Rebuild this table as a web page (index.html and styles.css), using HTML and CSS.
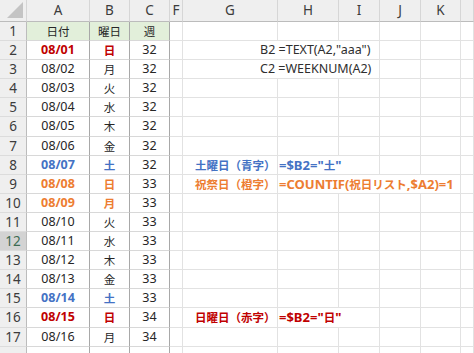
FILE: index.html
```html
<!DOCTYPE html>
<html lang="ja">
<head>
<meta charset="utf-8">
<link rel="stylesheet" href="styles.css">
</head>
<body>
<div class="sheet">
  <div class="row hdr">
    <div class="c corner"><span class="tri"></span></div>
    <div class="c">A</div><div class="c">B</div><div class="c">C</div><div class="c">F</div>
    <div class="c">G</div><div class="c">H</div><div class="c">I</div><div class="c">J</div><div class="c">K</div><div class="c"></div>
  </div>
  <div class="row">
    <div class="c rh">1</div>
    <div class="c t th jp">日付</div><div class="c t th jp">曜日</div><div class="c t th jp">週</div>
    <div class="c"></div><div class="c"></div><div class="c"></div><div class="c"></div><div class="c"></div><div class="c"></div><div class="c"></div>
  </div>
  <div class="row">
    <div class="c rh">2</div>
    <div class="c t red">08/01</div><div class="c t red jp">日</div><div class="c t">32</div>
    <div class="c"></div><div class="c note s3">B2 =TEXT(A2,"aaa")</div><div class="c"></div><div class="c"></div><div class="c"></div>
  </div>
  <div class="row">
    <div class="c rh">3</div>
    <div class="c t">08/02</div><div class="c t jp">月</div><div class="c t">32</div>
    <div class="c"></div><div class="c note s3">C2 =WEEKNUM(A2)</div><div class="c"></div><div class="c"></div><div class="c"></div>
  </div>
  <div class="row">
    <div class="c rh">4</div>
    <div class="c t">08/03</div><div class="c t jp">火</div><div class="c t">32</div>
    <div class="c"></div><div class="c"></div><div class="c"></div><div class="c"></div><div class="c"></div><div class="c"></div><div class="c"></div>
  </div>
  <div class="row">
    <div class="c rh">5</div>
    <div class="c t">08/04</div><div class="c t jp">水</div><div class="c t">32</div>
    <div class="c"></div><div class="c"></div><div class="c"></div><div class="c"></div><div class="c"></div><div class="c"></div><div class="c"></div>
  </div>
  <div class="row">
    <div class="c rh">6</div>
    <div class="c t">08/05</div><div class="c t jp">木</div><div class="c t">32</div>
    <div class="c"></div><div class="c"></div><div class="c"></div><div class="c"></div><div class="c"></div><div class="c"></div><div class="c"></div>
  </div>
  <div class="row">
    <div class="c rh">7</div>
    <div class="c t">08/06</div><div class="c t jp">金</div><div class="c t">32</div>
    <div class="c"></div><div class="c"></div><div class="c"></div><div class="c"></div><div class="c"></div><div class="c"></div><div class="c"></div>
  </div>
  <div class="row">
    <div class="c rh">8</div>
    <div class="c t blue">08/07</div><div class="c t blue jp">土</div><div class="c t">32</div>
    <div class="c"></div><div class="c lbl blue jp">土曜日（青字）</div><div class="c fx blue s2">=$B2="<span class="jp">土</span>"</div><div class="c"></div><div class="c"></div><div class="c"></div>
  </div>
  <div class="row">
    <div class="c rh">9</div>
    <div class="c t orange">08/08</div><div class="c t orange jp">日</div><div class="c t">33</div>
    <div class="c"></div><div class="c lbl orange jp">祝祭日（橙字）</div><div class="c fx orange s4">=COUNTIF(<span class="jp">祝日リスト</span>,$A2)=1</div><div class="c"></div>
  </div>
  <div class="row">
    <div class="c rh">10</div>
    <div class="c t orange">08/09</div><div class="c t orange jp">月</div><div class="c t">33</div>
    <div class="c"></div><div class="c"></div><div class="c"></div><div class="c"></div><div class="c"></div><div class="c"></div><div class="c"></div>
  </div>
  <div class="row">
    <div class="c rh">11</div>
    <div class="c t">08/10</div><div class="c t jp">火</div><div class="c t">33</div>
    <div class="c"></div><div class="c"></div><div class="c"></div><div class="c"></div><div class="c"></div><div class="c"></div><div class="c"></div>
  </div>
  <div class="row">
    <div class="c rh sel">12</div>
    <div class="c t">08/11</div><div class="c t jp">水</div><div class="c t">33</div>
    <div class="c"></div><div class="c"></div><div class="c"></div><div class="c"></div><div class="c"></div><div class="c"></div><div class="c"></div>
  </div>
  <div class="row">
    <div class="c rh">13</div>
    <div class="c t">08/12</div><div class="c t jp">木</div><div class="c t">33</div>
    <div class="c"></div><div class="c"></div><div class="c"></div><div class="c"></div><div class="c"></div><div class="c"></div><div class="c"></div>
  </div>
  <div class="row">
    <div class="c rh">14</div>
    <div class="c t">08/13</div><div class="c t jp">金</div><div class="c t">33</div>
    <div class="c"></div><div class="c"></div><div class="c"></div><div class="c"></div><div class="c"></div><div class="c"></div><div class="c"></div>
  </div>
  <div class="row">
    <div class="c rh">15</div>
    <div class="c t blue">08/14</div><div class="c t blue jp">土</div><div class="c t">33</div>
    <div class="c"></div><div class="c"></div><div class="c"></div><div class="c"></div><div class="c"></div><div class="c"></div><div class="c"></div>
  </div>
  <div class="row">
    <div class="c rh">16</div>
    <div class="c t red">08/15</div><div class="c t red jp">日</div><div class="c t">34</div>
    <div class="c"></div><div class="c lbl red jp">日曜日（赤字）</div><div class="c fx red s2">=$B2="<span class="jp">日</span>"</div><div class="c"></div><div class="c"></div><div class="c"></div>
  </div>
  <div class="row">
    <div class="c rh">17</div>
    <div class="c t">08/16</div><div class="c t jp">月</div><div class="c t">34</div>
    <div class="c"></div><div class="c"></div><div class="c"></div><div class="c"></div><div class="c"></div><div class="c"></div><div class="c"></div>
  </div>
  <div class="row last">
    <div class="c rh">18</div>
    <div class="c t">08/17</div><div class="c t jp">火</div><div class="c t">34</div>
    <div class="c"></div><div class="c"></div><div class="c"></div><div class="c"></div><div class="c"></div><div class="c"></div><div class="c"></div>
  </div>
</div>
</body>
</html>
```

FILE: styles.css
```css
html, body {
  margin: 0;
  padding: 0;
}
body {
  width: 474px;
  height: 353px;
  overflow: hidden;
  background: #ffffff;
  font-family: "Noto Sans", "Noto Sans CJK JP", sans-serif;
  font-size: 12.5px;
  color: #262626;
}
.sheet {
  display: flex;
  flex-direction: column;
}
.row {
  display: grid;
  grid-template-columns: 27px 63px 40px 40px 13px 95px 61px 41px 41px 40px 13px;
  height: 19.1px;
  line-height: 18px;
}
.c {
  box-sizing: border-box;
  border-right: 1px solid #e2e2e2;
  border-bottom: 1px solid #e2e2e2;
  white-space: nowrap;
  overflow: visible;
}
.jp {
  font-family: "Noto Sans CJK JP", sans-serif;
  font-size: 11.5px;
}
.hdr {
  height: 22px;
  line-height: 21px;
}
.hdr .c {
  background: #efefef;
  border-right: 1px solid #d6d6d6;
  border-bottom: 1px solid #bcbcbc;
  text-align: center;
  color: #3c3c3c;
  font-family: "Noto Sans", sans-serif;
  font-size: 13.5px;
}
.hdr .corner {
  display: flex;
  align-items: flex-end;
  justify-content: flex-end;
  padding: 0 3px 3px 0;
}
.tri {
  width: 0;
  height: 0;
  border-left: 16px solid transparent;
  border-bottom: 16px solid #c4c4c4;
}
.rh {
  background: #efefef;
  border-right: 1px solid #bcbcbc;
  border-bottom: 1px solid #dcdcdc;
  text-align: center;
  color: #3c3c3c;
  font-family: "Noto Sans", sans-serif;
  font-size: 13.5px;
}
.rh.sel {
  background: #d3d3d3;
  color: #3d6b52;
}
.last {
  line-height: 22px;
}
.t {
  text-align: center;
  border-right: 1px solid #a8a8a8;
  border-bottom: 1px solid #d8d8d8;
}
.th {
  background: #e2efda;
}
.red { color: #c00000; font-weight: 700; }
.blue { color: #4472c4; font-weight: 700; }
.orange { color: #ed7d31; font-weight: 700; }
.fx {
  font-size: 13px;
  padding-left: 1px;
}
.note {
  padding-left: 77px;
  color: #2e2e2e;
}
.s2 { grid-column: span 2; }
.s3 { grid-column: span 3; }
.s4 { grid-column: span 4; }
.lbl {
  padding-left: 12px;
}
```
